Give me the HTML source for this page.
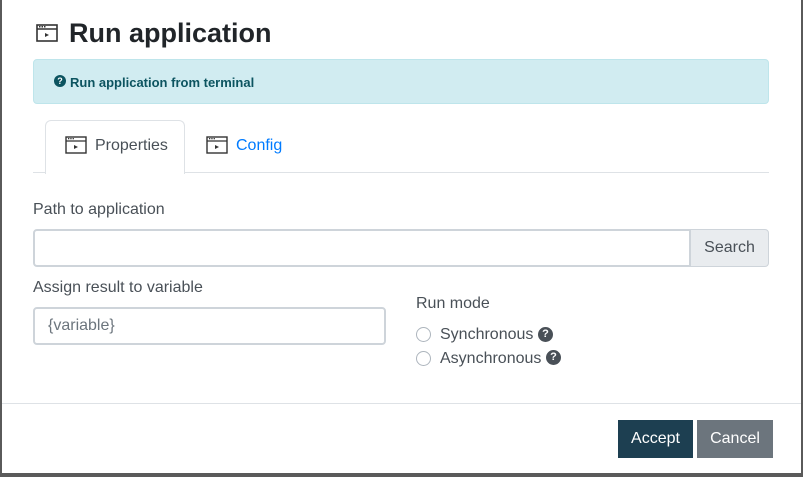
<!DOCTYPE html>
<html><head><meta charset="utf-8"><style>
*{box-sizing:border-box;margin:0;padding:0}
body{width:803px;height:477px;background:#5a5a5a;font-family:"Liberation Sans",Arial,sans-serif;position:relative;overflow:hidden}
.modal{position:absolute;left:2px;top:0;width:799px;height:473px;background:#fff}
.a{position:absolute}
.ico{position:absolute}
</style></head><body>
<div class="modal"></div>
<svg class="ico" style="left:36px;top:24px" width="22" height="18" viewBox="0 0 22 18"><rect x="1" y="1" width="20" height="16" fill="none" stroke="#333" stroke-width="1.6"/><line x1="1" y1="5" x2="21" y2="5" stroke="#333" stroke-width="1.4"/><rect x="3" y="2" width="1.5" height="1.5" fill="#333"/><rect x="5.5" y="2" width="1.5" height="1.5" fill="#333"/><rect x="8" y="2" width="1.5" height="1.5" fill="#333"/><path d="M9 9l4 2-4 2z" fill="#333"/></svg>
<div class="a" style="left:69px;top:18px;font-size:27px;font-weight:bold;color:#212529">Run application</div>
<div class="a" style="left:33px;top:59px;width:736px;height:45px;background:#d1ecf1;border:1px solid #bee5eb;border-radius:4px"></div>
<div class="a" style="left:54px;top:75px;width:12px;height:12px;border-radius:50%;background:#0c5460;color:#fff;font-size:9px;font-weight:bold;text-align:center;line-height:12px">?</div>
<div class="a" style="left:70px;top:75px;font-size:13px;font-weight:bold;color:#0c5460">Run application from terminal</div>
<div class="a" style="left:33px;top:172px;width:736px;height:1px;background:#dee2e6"></div>
<div class="a" style="left:45px;top:120px;width:140px;height:54px;background:#fff;border:1px solid #dee2e6;border-bottom:none;border-radius:6px 6px 0 0"></div>
<svg class="ico" style="left:65px;top:136px" width="22" height="18" viewBox="0 0 22 18"><rect x="1" y="1" width="20" height="16" fill="none" stroke="#333" stroke-width="1.4"/><line x1="1" y1="5" x2="21" y2="5" stroke="#333" stroke-width="1.2"/><rect x="3" y="2" width="1.3" height="1.3" fill="#333"/><rect x="5.3" y="2" width="1.3" height="1.3" fill="#333"/><rect x="7.6" y="2" width="1.3" height="1.3" fill="#333"/><path d="M9 9l4 2-4 2z" fill="#333"/></svg>
<div class="a" style="left:95px;top:137px;font-size:16px;color:#495057">Properties</div>
<svg class="ico" style="left:206px;top:136px" width="22" height="18" viewBox="0 0 22 18"><rect x="1" y="1" width="20" height="16" fill="none" stroke="#333" stroke-width="1.4"/><line x1="1" y1="5" x2="21" y2="5" stroke="#333" stroke-width="1.2"/><rect x="3" y="2" width="1.3" height="1.3" fill="#333"/><rect x="5.3" y="2" width="1.3" height="1.3" fill="#333"/><rect x="7.6" y="2" width="1.3" height="1.3" fill="#333"/><path d="M9 9l4 2-4 2z" fill="#333"/></svg>
<div class="a" style="left:236px;top:137px;font-size:16px;color:#007bff">Config</div>
<div class="a" style="left:33px;top:201px;font-size:16px;color:#495057">Path to application</div>
<div class="a" style="left:33px;top:229px;width:658px;height:38px;border:2px solid #ced4da;border-radius:4px 0 0 4px"></div>
<div class="a" style="left:690px;top:229px;width:79px;height:38px;background:#e9ecef;border:1px solid #ced4da;border-radius:0 4px 4px 0;font-size:16px;color:#495057;text-align:center;line-height:36px">Search</div>
<div class="a" style="left:33px;top:279px;font-size:16px;color:#495057">Assign result to variable</div>
<div class="a" style="left:33px;top:307px;width:353px;height:38px;border:2px solid #ced4da;border-radius:4px;font-size:16px;color:#6c757d;padding-left:13px;line-height:34px">{variable}</div>
<div class="a" style="left:416px;top:295px;font-size:16px;color:#495057">Run mode</div>
<div class="a" style="left:416px;top:327px;width:15px;height:15px;border:1px solid #adb5bd;border-radius:50%"></div>
<div class="a" style="left:440px;top:326px;font-size:16px;color:#495057">Synchronous</div>
<div class="a" style="left:538px;top:327px;width:15px;height:15px;border-radius:50%;background:#495057;color:#fff;font-size:11px;font-weight:bold;text-align:center;line-height:15px">?</div>
<div class="a" style="left:416px;top:351px;width:15px;height:15px;border:1px solid #adb5bd;border-radius:50%"></div>
<div class="a" style="left:440px;top:350px;font-size:16px;color:#495057">Asynchronous</div>
<div class="a" style="left:546px;top:350px;width:15px;height:15px;border-radius:50%;background:#495057;color:#fff;font-size:11px;font-weight:bold;text-align:center;line-height:15px">?</div>
<div class="a" style="left:2px;top:403px;width:799px;height:1px;background:#dee2e6"></div>
<div class="a" style="left:618px;top:420px;width:75px;height:38px;background:#1d3f51;color:#fff;font-size:16px;text-align:center;line-height:38px">Accept</div>
<div class="a" style="left:697px;top:420px;width:76px;height:38px;background:#6c757d;color:#fff;font-size:16px;text-align:center;line-height:38px">Cancel</div>
</body></html>
